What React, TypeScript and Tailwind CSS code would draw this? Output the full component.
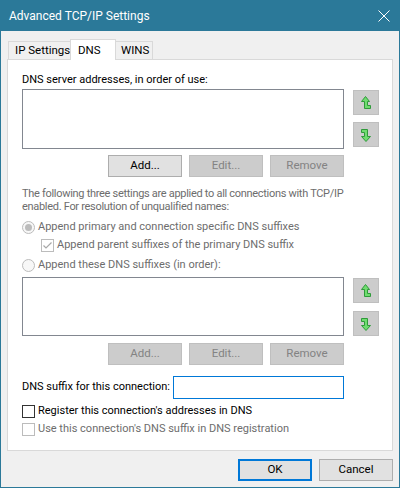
import React from 'react'

const GRAY = 'text-[#6d6d6d]'

function ArrowUp() {
  return (
    <svg width="12" height="16" viewBox="0 0 12 16">
      <polygon
        points="5.5,1.5 1.5,6.5 4.5,6.5 4.5,13.5 10.5,13.5 10.5,10.5 7.5,10.5 7.5,6.5 9.5,6.5"
        fill="#6fdc6f"
        stroke="#2f9a3a"
        strokeWidth="1"
      />
    </svg>
  )
}

function ArrowDown() {
  return (
    <svg width="12" height="16" viewBox="0 0 12 16">
      <polygon
        points="1.5,2.5 7.5,2.5 7.5,9.5 10.5,9.5 6,14.5 1.5,9.5 4.5,9.5 4.5,5.5 1.5,5.5"
        fill="#6fdc6f"
        stroke="#2f9a3a"
        strokeWidth="1"
      />
    </svg>
  )
}

function Btn({ label, disabled, primary }: { label: string; disabled?: boolean; primary?: boolean }) {
  let cls = 'bg-[#e1e1e1] border border-[#adadad] text-black'
  if (disabled) cls = 'bg-[#cccccc] border border-[#bfbfbf] text-[#838383]'
  if (primary) cls = 'bg-[#e1e1e1] border-2 border-[#0078d7] text-black'
  return (
    <div className={`w-[74px] h-[22px] flex items-center justify-center text-[11.5px] ${cls}`}>{label}</div>
  )
}

function ArrowBtns({ gap }: { gap: string }) {
  return (
    <div className={`ml-[9px] pt-[1px] flex flex-col ${gap}`}>
      <div className="w-[26px] h-[25px] bg-[#cccccc] border border-[#bfbfbf] flex items-center justify-center">
        <ArrowUp />
      </div>
      <div className="w-[26px] h-[25px] bg-[#cccccc] border border-[#bfbfbf] flex items-center justify-center">
        <ArrowDown />
      </div>
    </div>
  )
}

function ListRow({ height, gap }: { height: string; gap: string }) {
  return (
    <div className="flex">
      <div className={`w-[322px] ${height} border border-[#828790] bg-white`} />
      <ArrowBtns gap={gap} />
    </div>
  )
}

function ButtonRow({ addDisabled }: { addDisabled?: boolean }) {
  return (
    <div className="w-[322px] flex justify-end gap-[7px]">
      <Btn label="Add..." disabled={addDisabled} />
      <Btn label="Edit..." disabled />
      <Btn label="Remove" disabled />
    </div>
  )
}

function Radio({ checked }: { checked?: boolean }) {
  return (
    <div className="w-[13px] h-[13px] shrink-0 rounded-full border border-[#bcbcbc] bg-[#f7f7f7] flex items-center justify-center">
      {checked && <div className="w-[7px] h-[7px] rounded-full bg-[#bcbcbc]" />}
    </div>
  )
}

function Check({ checked, disabled }: { checked?: boolean; disabled?: boolean }) {
  return (
    <div
      className={`w-[13px] h-[13px] shrink-0 border flex items-center justify-center ${
        disabled ? 'border-[#bcbcbc] bg-white' : 'border-[#333333] bg-white'
      }`}
    >
      {checked && (
        <svg width="11" height="11" viewBox="0 0 11 11">
          <polyline points="1.5,5.5 4,8 9.5,2.5" fill="none" stroke="#a8a8a8" strokeWidth="1.2" />
        </svg>
      )}
    </div>
  )
}

export default function App() {
  return (
    <div className="w-[400px] h-[488px] border border-[#2b7999] bg-[#f0f0f0] flex flex-col font-['Roboto','Liberation_Sans',sans-serif] text-[11px] text-black whitespace-nowrap overflow-hidden">
      {/* Title bar */}
      <div className="h-[30px] bg-[#2b7999] flex items-center pl-[8px] pr-[8px] text-white">
        <span className="text-[12px]">Advanced TCP/IP Settings</span>
        <svg className="ml-auto mr-[1px]" width="12" height="12" viewBox="0 0 12 12">
          <line x1="0.5" y1="0.5" x2="11.5" y2="11.5" stroke="white" strokeWidth="1" />
          <line x1="11.5" y1="0.5" x2="0.5" y2="11.5" stroke="white" strokeWidth="1" />
        </svg>
      </div>

      {/* Tabs */}
      <div className="mt-[7px] ml-[7px] flex items-end h-[21px] text-[11.5px]">
        <div className="h-[18px] w-[64px] pl-[6px] border border-b-0 border-[#d9d9d9] bg-[#f0f0f0] flex items-center">IP Settings</div>
        <div className="relative z-10 -mb-[1px] -ml-[2px] h-[21px] w-[46px] pl-[7px] pt-[2px] border border-b-0 border-[#d9d9d9] bg-white">DNS</div>
        <div className="h-[18px] w-[38px] pl-[5px] -ml-[1px] border border-b-0 border-[#d9d9d9] bg-[#f0f0f0] flex items-center">WINS</div>
      </div>

      {/* Panel */}
      <div className="mx-[6px] h-[392px] border border-[#d9d9d9] bg-white pl-[14px] pt-[12px]">
        <div className="h-[15px] leading-[15px]">DNS server addresses, in order of use:</div>
        <div className="mt-[2px]">
          <ListRow height="h-[60px]" gap="gap-[7px]" />
        </div>
        <div className="mt-[6px]">
          <ButtonRow />
        </div>

        <div className={`mt-[10px] leading-[13px] tracking-[-0.3px] ${GRAY}`}>
          <div>The following three settings are applied to all connections with TCP/IP</div>
          <div>enabled. For resolution of unqualified names:</div>
        </div>

        <div className={`mt-[7px] h-[15px] flex items-center gap-[3px] ${GRAY}`}>
          <Radio checked />
          <span>Append primary and connection specific DNS suffixes</span>
        </div>
        <div className={`mt-[3px] h-[15px] pl-[19px] flex items-center gap-[3px] ${GRAY}`}>
          <Check checked disabled />
          <span>Append parent suffixes of the primary DNS suffix</span>
        </div>
        <div className={`mt-[5px] h-[15px] flex items-center gap-[3px] ${GRAY}`}>
          <Radio />
          <span>Append these DNS suffixes (in order):</span>
        </div>

        <div className="mt-[4px]">
          <ListRow height="h-[59px]" gap="gap-[8px]" />
        </div>
        <div className="mt-[7px]">
          <ButtonRow addDisabled />
        </div>

        <div className="mt-[11px] flex items-center h-[23px]">
          <span className="w-[151px]">DNS suffix for this connection:</span>
          <div className="w-[171px] h-[23px] border border-[#0078d7] bg-white" />
        </div>

        <div className="mt-[5px] h-[15px] flex items-center gap-[3px]">
          <Check />
          <span>Register this connection's addresses in DNS</span>
        </div>
        <div className={`mt-[3px] h-[15px] flex items-center gap-[3px] ${GRAY}`}>
          <Check disabled />
          <span>Use this connection's DNS suffix in DNS registration</span>
        </div>
      </div>

      {/* Footer */}
      <div className="mt-[8px] pr-[6px] flex justify-end gap-[7px]">
        <Btn label="OK" primary />
        <Btn label="Cancel" />
      </div>
    </div>
  )
}
